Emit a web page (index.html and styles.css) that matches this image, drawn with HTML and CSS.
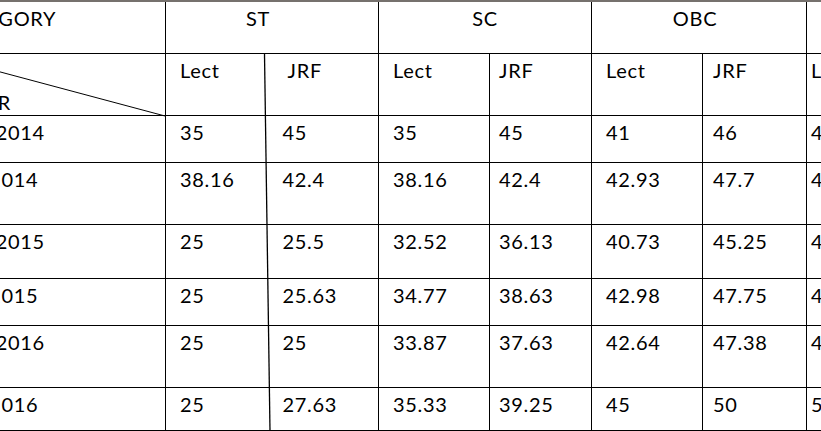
FILE: index.html
```html
<!DOCTYPE html>
<html lang="en">
<head>
    <meta charset="UTF-8">
    <title>Cut-off marks</title>
    <link rel="stylesheet" href="styles.css">
</head>
<body>

<div class="sheet">
    <table class="cutoff">
        <colgroup>
            <col class="c-year">
            <col class="c-st1">
            <col class="c-st2">
            <col class="c-sc1">
            <col class="c-sc2">
            <col class="c-obc1">
            <col class="c-obc2">
            <col class="c-ur">
        </colgroup>

        <!--  group heads  -->
        <tr class="r-group">
            <td class="cat">CATEGORY</td>
            <td colspan="2" class="grp grp-st">ST</td>
            <td colspan="2" class="grp">SC</td>
            <td colspan="2" class="grp grp-obc">OBC</td>
            <td class="grp"></td>
        </tr>

        <!--  sub heads  -->
        <tr class="r-sub">
            <td class="year">YEAR</td>
            <td>Lect</td>
            <td class="jrf-st">JRF</td>
            <td>Lect</td>
            <td>JRF</td>
            <td>Lect</td>
            <td>JRF</td>
            <td>Lect</td>
        </tr>

        <tr class="r-a">
            <td>June 2014</td><td>35</td><td>45</td><td>35</td><td>45</td><td>41</td><td>46</td><td>45</td>
        </tr>
        <tr class="r-b">
            <td>Dec 2014</td><td>38.16</td><td>42.4</td><td>38.16</td><td>42.4</td><td>42.93</td><td>47.7</td><td>47.7</td>
        </tr>
        <tr class="r-c">
            <td>June 2015</td><td>25</td><td>25.5</td><td>32.52</td><td>36.13</td><td>40.73</td><td>45.25</td><td>45.2</td>
        </tr>
        <tr class="r-d">
            <td>Dec 2015</td><td>25</td><td>25.63</td><td>34.77</td><td>38.63</td><td>42.98</td><td>47.75</td><td>48.5</td>
        </tr>
        <tr class="r-e">
            <td>June 2016</td><td>25</td><td>25</td><td>33.87</td><td>37.63</td><td>42.64</td><td>47.38</td><td>48.3</td>
        </tr>
        <tr class="r-f">
            <td>Dec 2016</td><td>25</td><td>27.63</td><td>35.33</td><td>39.25</td><td>45</td><td>50</td><td>50</td>
        </tr>
    </table>

    <!--  hand drawn rules: the slash in the corner cell and the leaning ST divider  -->
    <svg class="rules" width="821" height="431" viewBox="0 0 821 431">
        <line x1="-67" y1="54" x2="165" y2="116" stroke="#000" stroke-width="1"/>
        <line x1="264.5" y1="54" x2="270" y2="431" stroke="#000" stroke-width="1.3"/>
    </svg>
</div>

</body>
</html>
```

FILE: styles.css
```css
html, body {margin: 0; padding: 0; background: #fff;}
body {overflow: hidden; font-family: Lato, "Liberation Sans", sans-serif;}

/* the sheet is cropped: first column runs off the left edge */
.sheet {
    position: relative;
    width: 821px;
    height: 431px;
    overflow: hidden;
}

.cutoff {
    border-collapse: collapse;
    table-layout: fixed;
    width: 993px;
    margin-left: -67px;
    border-top: 2px solid #76716d;
    color: #000;
    font-size: 20px;
    letter-spacing: 0.7px;
    line-height: 24px;
}

.c-year {width: 232px;}
.c-st1 {width: 101px;}
.c-st2 {width: 112px;}
.c-sc1 {width: 111px;}
.c-sc2 {width: 102px;}
.c-obc1 {width: 111px;}
.c-obc2 {width: 104px;}
.c-ur {width: 120px;}

.cutoff td {
    border: 1px solid #000;
    vertical-align: top;
    padding: 4px 0 0 14px;
    white-space: nowrap;
    overflow: hidden;
}

/* ST Lect | JRF divider is drawn by the svg */
.cutoff tr:not(.r-group) td:nth-child(2) {border-right: none;}
.cutoff tr:not(.r-group) td:nth-child(3) {border-left: none; padding-left: 16px;}

.cutoff tr:not(.r-group) td:nth-child(1) {padding-left: 12px;}
.cutoff tr:not(.r-group) td:nth-child(5) {padding-left: 9px;}
.cutoff tr:not(.r-group) td:nth-child(7) {padding-left: 10px;}
.cutoff tr:not(.r-group) td:nth-child(8) {padding-left: 4px;}

.r-group {height: 52px;}
.r-sub {height: 62px;}
.r-a {height: 47px;}
.r-b {height: 62px;}
.r-c {height: 54px;}
.r-d {height: 47px;}
.r-e {height: 62px;}
.r-f {height: 43px;}

.cutoff td.cat {padding-left: 13px;}
.grp {text-align: center;}
.cutoff td.grp {padding-left: 0;}
.cutoff td.grp-st {padding-right: 28px;}
.cutoff td.grp-obc {padding-right: 8px;}

.cutoff tr.r-sub td.year {padding-top: 36px; padding-left: 24px;}
.cutoff tr.r-sub td.jrf-st {padding-left: 21px;}

.rules {
    position: absolute;
    left: 0;
    top: 0;
    pointer-events: none;
}
```
